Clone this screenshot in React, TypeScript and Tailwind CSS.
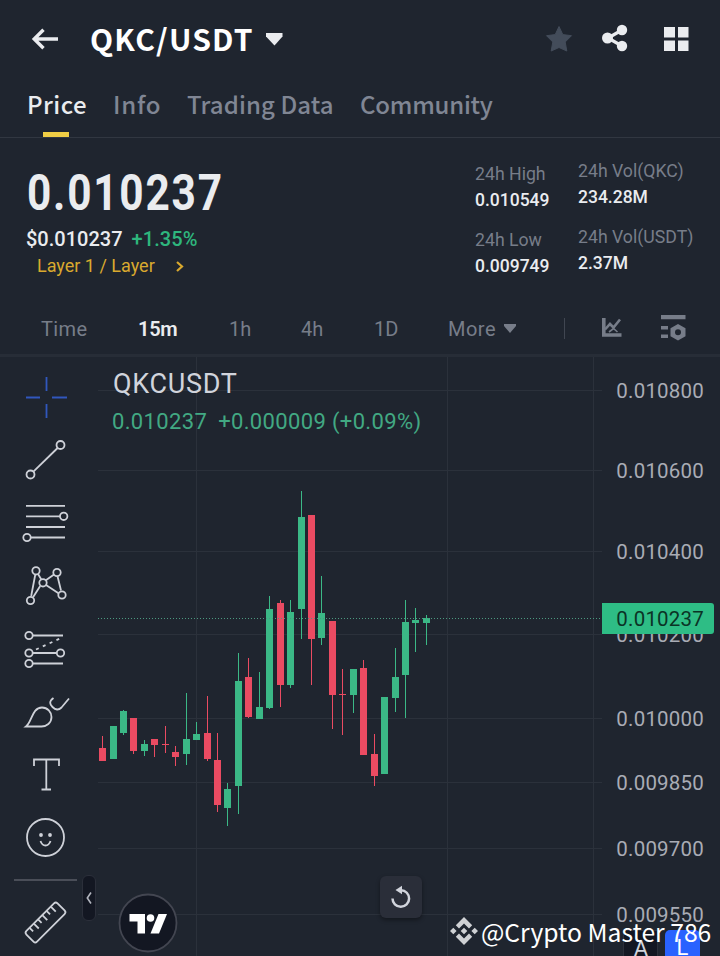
import React from "react";

const SANS = "font-['Noto_Sans_CJK_SC',sans-serif]";

type Candle = [x: number, high: number, top: number, bottom: number, low: number, up: 0 | 1];

const candles: Candle[] = [
  [99, 736, 748, 761, 761, 0],
  [110, 726, 726, 759, 759, 1],
  [120, 710, 711, 733, 735, 1],
  [130, 718, 718, 751, 754, 0],
  [141, 740, 744, 751, 756, 1],
  [151, 739, 739, 745, 757, 0],
  [162, 726, 744, 745, 753, 0],
  [172, 746, 752, 757, 766, 0],
  [183, 693, 739, 754, 765, 1],
  [193, 722, 734, 740, 740, 1],
  [204, 696, 733, 759, 761, 0],
  [214, 733, 760, 805, 812, 0],
  [224, 783, 789, 808, 826, 1],
  [235, 653, 681, 786, 814, 1],
  [245, 658, 677, 717, 718, 0],
  [256, 672, 707, 719, 719, 1],
  [266, 596, 609, 708, 709, 1],
  [277, 600, 603, 685, 707, 0],
  [287, 600, 612, 685, 688, 1],
  [298, 491, 517, 609, 639, 1],
  [308, 515, 515, 639, 685, 0],
  [318, 576, 613, 638, 645, 1],
  [329, 621, 621, 695, 729, 0],
  [339, 669, 694, 695, 735, 0],
  [350, 669, 669, 695, 713, 1],
  [360, 660, 668, 755, 755, 0],
  [371, 734, 754, 776, 786, 0],
  [381, 697, 697, 774, 774, 1],
  [392, 648, 677, 698, 712, 1],
  [402, 600, 622, 675, 718, 1],
  [412, 608, 620, 623, 652, 1],
  [423, 615, 618, 623, 645, 1],
];

const levels: [number, string][] = [
  [390, "0.010800"],
  [470, "0.010600"],
  [551, "0.010400"],
  [634, "0.010200"],
  [718, "0.010000"],
  [782, "0.009850"],
  [848, "0.009700"],
  [914, "0.009550"],
];

function Header() {
  return (
    <header className="flex h-[78px] items-center pl-[31px] pr-[31px]">
      <svg width="28" height="22" viewBox="0 0 28 22" fill="none" stroke="#eaecef" strokeWidth="3.4">
        <path d="M27 11H4M12.5 1.8 3.2 11l9.3 9.2" />
      </svg>
      <h1 className={`${SANS} -mt-[3px] ml-[31px] w-[162px] whitespace-nowrap text-[30px] font-bold leading-[44px] tracking-[1.2px] text-white`}>
        QKC/USDT
      </h1>
      <svg className="ml-[14px]" width="17" height="14" viewBox="0 0 17 14" fill="#eaecef">
        <path d="M0 1h16.500v3.500L8.500 13.500 0 4.500z" />
      </svg>
      <svg className="ml-auto" width="28" height="28" viewBox="0 0 28 28">
        <path d="M14 1.5l3.800 8.100 8.700 1.100-6.300 6.300 1.600 9-7.800-3.500L6.200 26l1.600-9-6.300-6.300 8.700-1.100z" fill="#434c5a" stroke="#434c5a" strokeWidth="1" strokeLinejoin="round" />
      </svg>
      <svg className="-mt-[2px] ml-[29px]" width="26" height="28" viewBox="0 0 26 28" fill="#eaecef">
        <path d="M20 6 6 14l14 8" fill="none" stroke="#eaecef" strokeWidth="3.2" />
        <circle cx="20" cy="6" r="5.200" />
        <circle cx="5.500" cy="14" r="5.500" />
        <circle cx="20" cy="22" r="5.200" />
      </svg>
      <svg className="-mt-px ml-[36px]" width="25" height="24" viewBox="0 0 25 24" fill="#eaecef">
        <path d="M0 0h11v10.500H0zM14 0h10.500v10.500H14zM0 13.500h11V24H0zM14 13.500h10.500V24H14z" />
      </svg>
    </header>
  );
}

function Tabs() {
  return (
    <nav className={`${SANS} flex h-[60px] border-b border-[#313741] pl-[27px] text-[24px] font-medium leading-[34px] text-[#808694]`}>
      <div className="flex w-[86px] flex-col pt-[9px] text-[#eaecef]">
        <span className="tracking-[0.5px]">Price</span>
        <span className="ml-4 mt-[11px] h-[5px] w-[26px] shrink-0 bg-[#f0ce45]" />
      </div>
      <span className="w-[74px] pt-[9px] tracking-[0.8px]">Info</span>
      <span className="w-[173px] whitespace-nowrap pt-[9px] tracking-[0.1px]">Trading Data</span>
      <span className="pt-[9px] tracking-[-0.25px]">Community</span>
    </nav>
  );
}

function Stat({ label, value }: { label: string; value: string }) {
  return (
    <div className="h-[66px]">
      <div className="whitespace-nowrap text-[17.700px] leading-[26px] text-[#777d89]">{label}</div>
      <div className="whitespace-nowrap text-[17.500px] font-medium leading-[26px] text-[#eaecef]">{value}</div>
    </div>
  );
}

function Summary() {
  return (
    <section className="flex h-[164px] pl-[27px]">
      <div className="w-[448px] pt-[26px]">
        <div className="origin-left scale-x-[0.84] text-[50.500px] font-bold leading-[58px] tracking-[2.100px] text-[#eaecef]">0.010237</div>
        <div className="-ml-px mt-[4px] flex gap-[9px] text-[20px] font-medium leading-[26px]">
          <span className="text-[#eaecef]">$0.010237</span>
          <span className="tracking-[0.1px] text-[#2eb67d]">+1.35%</span>
        </div>
        <div className="flex items-center pl-[10px] pt-px text-[18px] leading-[26px] text-[#d9a92e]">
          <span>Layer 1 / Layer</span>
          <svg className="ml-[21px]" width="8" height="11" viewBox="0 0 8 11" fill="none" stroke="#d9a92e" strokeWidth="2.200">
            <path d="M1 1l5 4.500-5 4.500" />
          </svg>
        </div>
      </div>
      <div className="w-[103px] pt-[23px]">
        <Stat label="24h High" value="0.010549" />
        <Stat label="24h Low" value="0.009749" />
      </div>
      <div className="pt-[20px]">
        <Stat label="24h Vol(QKC)" value="234.28M" />
        <Stat label="24h Vol(USDT)" value="2.37M" />
      </div>
    </section>
  );
}

function Intervals() {
  return (
    <div className="flex h-[52px] items-center pl-[41px] pt-px text-[20px] leading-[28px] text-[#777d89]">
      <span className="w-[97px] tracking-[0.4px]">Time</span>
      <span className="w-[91px] font-semibold tracking-[-0.3px] text-[#eaecef]">15m</span>
      <span className="w-[72px]">1h</span>
      <span className="w-[73px]">4h</span>
      <span className="w-[74px]">1D</span>
      <span className="w-[56px] tracking-[0.5px]">More</span>
      <svg width="12" height="9" viewBox="0 0 12 9" fill="#777d89">
        <path d="M0 0h12v2L6 9 0 2z" />
      </svg>
      <span className="ml-[48px] h-[21px] w-px bg-[#404651]" />
      <svg className="-mt-[3px] ml-[37px]" width="20" height="21" viewBox="0 0 20 21" fill="none" stroke="#777d89">
        <path d="M1.800 1v17H19.500" strokeWidth="3.600" />
        <path d="M3 12.500 8 7l3.500 3.500L18 2.500" strokeWidth="2.600" />
        <path d="M7 15l4.500-3.500 4 3.500" strokeWidth="1.600" />
      </svg>
      <svg className="-mt-px ml-[39px]" width="25" height="26" viewBox="0 0 25 26" fill="#777d89">
        <path d="M0 0h24.500v4.200H0zM0 11h7v3.500H0zM0 19.500h7V23H0z" />
        <path fillRule="evenodd" d="M17 9l7.500 4.200v8L17 25.500l-7.500-4.300v-8zM17 14.200a3 3 0 1 0 0 6 3 3 0 0 0 0-6z" />
      </svg>
    </div>
  );
}

/* Drawing tools share one coordinate space, 98px wide, starting at y = 357 */
function DrawingTools() {
  return (
    <aside className="relative h-[599px] w-[98px] shrink-0">
      <svg width="98" height="599" viewBox="0 357 98 599" fill="none" stroke="#ced1d8" strokeWidth="1.800">
        <path d="M46.500 377v14M46.500 404v14M26 397.500h14M52 397.500h15" stroke="#3157bd" />
        <circle cx="60.500" cy="445" r="4" />
        <circle cx="30.500" cy="474.500" r="4" />
        <path d="M57.600 448 33.400 471.600" />
        <path d="M26 505.800h39M26 516.300h34M26 527h39M31 537.500h34" />
        <circle cx="63.700" cy="516.300" r="3.700" />
        <circle cx="27" cy="537.500" r="3.700" />
        <path d="M35.300 574.500 31.200 596M38 574l3.200 5.200M45.500 580.500l8.500-6M46 585l12.500 8.200M40.200 586 33.200 597M57.500 576.200l3.500 14.300" />
        <circle cx="36" cy="570.800" r="3.700" />
        <circle cx="57" cy="572.500" r="3.700" />
        <circle cx="43" cy="582.800" r="3.700" />
        <circle cx="62" cy="595" r="3.700" />
        <circle cx="30.500" cy="600.500" r="3.700" />
        <path d="M33 635.500h30M33 653h23M33 663.500h30" />
        <path d="M36 649.500 61 638" strokeDasharray="3 4.500" />
        <circle cx="29" cy="635.500" r="3.700" />
        <circle cx="29" cy="653" r="3.700" />
        <circle cx="60.500" cy="653" r="3.700" />
        <circle cx="29" cy="663.500" r="3.700" />
        <path d="M26 726.500C32 722 32 707.500 42 707.500c5.500 0 9.500 4.300 9.500 9.500 0 6-5 9.500-10 9.500zM53.500 698c-5 3.500-3.500 6.500-1 9 3 3 6 3.500 9 .5L69 698.500" />
        <path d="M34 766v-6.500h25v6.500M46.300 759.500V789.500M41.500 789.500h9.500" />
        <circle cx="45.500" cy="837.500" r="18.500" />
        <circle cx="41" cy="835" r="1" fill="#ced1d8" />
        <circle cx="50" cy="835" r="1" fill="#ced1d8" />
        <path d="M40.500 841c2 6 8 6 10 0" />
        <path d="M14 880h63" stroke="#4a4e58" />
        <g transform="translate(45.500 922.500) rotate(-45)">
          <rect x="-22" y="-7.500" width="44" height="15" rx="2.500" />
          <path d="M-15-7.500v5M-9-7.500v7M-3-7.500v5M3-7.500v7M9-7.500v5M15-7.500v7" />
        </g>
      </svg>
      <button className="absolute left-[82px] top-[518px] flex h-[46px] w-[14px] items-center justify-center rounded-[6px] border border-[#2b2f3a] bg-[#131722]">
        <svg width="6" height="12" viewBox="0 0 6 12" fill="none" stroke="#b2b5be" strokeWidth="1.600">
          <path d="M5 .5 1.300 6 5 11.500" />
        </svg>
      </button>
    </aside>
  );
}

function Chart() {
  return (
    <div className="relative h-[599px] w-[622px] font-[Roboto,sans-serif]">
      <svg className="block" width="622" height="599" viewBox="98 357 622 599" shapeRendering="crispEdges">
        {levels.map(([y]) => (
          <rect key={y} x="98" y={y} width="504" height="1" fill="#2b313b" />
        ))}
        {[196, 447, 593].map((x) => (
          <rect key={x} x={x} y="357" width="1" height="599" fill="#2b313b" />
        ))}
        {candles.map(([x, high, top, bottom, low, up]) => (
          <g key={x} fill={up ? "#3bb886" : "#ea4b62"}>
            <rect x={x + 3} y={high} width="1" height={low - high} />
            <rect x={x} y={top} width="7" height={bottom - top} />
          </g>
        ))}
        <path d="M98 618.500H602" stroke="#4c9a80" strokeDasharray="1 2" />
      </svg>
      {levels.map(([y, label]) => (
        <span key={label} className="absolute right-[16px] text-[20.500px] leading-[24px] tracking-[0.2px] text-[#a9acb5]" style={{ top: y - 368 }}>
          {label}
        </span>
      ))}
      <div className="absolute left-[504px] top-[246px] h-[31px] w-[112px] rounded-r-[3px] bg-[#2ebd85] pr-[10px] text-right text-[20.500px] leading-[32px] tracking-[0.2px] text-[#0b3325]">
        0.010237
      </div>
      <div className="absolute left-[14px] top-[10px]">
        <div className="pl-px text-[27px] leading-[34px] tracking-[0.700px] text-[#d1d4dc]">QKCUSDT</div>
        <div className="mt-[8px] flex gap-[11px] whitespace-nowrap text-[22px] leading-[26px] tracking-[0.350px] text-[#42a983]">
          <span>0.010237</span>
          <span>+0.000009 (+0.09%)</span>
        </div>
      </div>
      <svg className="absolute left-[20px] top-[536px]" width="60" height="60" viewBox="0 0 60 60">
        <circle cx="30" cy="30" r="28.500" fill="#131722" stroke="#434651" strokeWidth="1.800" />
        <g fill="#fff">
          <path d="M11.500 21H27v19.500h-7.500V28.500h-8z" />
          <circle cx="32.500" cy="25" r="3.800" />
          <path d="M40.500 21h8.500l-8 19.500h-8.500z" />
        </g>
      </svg>
      <button className="absolute left-[282px] top-[519px] flex h-[42px] w-[42px] items-center justify-center rounded-[6px] bg-[#2a2e39] shadow-[0_2px_4px_rgba(0,0,0,0.4)]">
        <svg width="22" height="24" viewBox="0 0 22 24" fill="none">
          <path d="M2.500 13.500a8.300 8.300 0 1 0 8.500-8.300" stroke="#d1d4dc" strokeWidth="2.500" />
          <path d="M5.500 5 12 .8v8.400z" fill="#d1d4dc" />
        </svg>
      </button>
      <div className="absolute left-[525px] top-[573px] flex h-[26px] gap-[7px] overflow-hidden text-[22px]">
        <span className="h-[34px] w-[35px] border border-[#2b2f3a] bg-[#131722] pl-px text-center leading-[36px] text-[#d1d4dc]">A</span>
        <span className="h-[34px] w-[35px] rounded-t-[5px] bg-[#2962ff] text-center leading-[36px] text-white">L</span>
      </div>
      <div className="absolute left-[352px] top-[557px] flex items-center">
        <svg width="28" height="28" viewBox="0 0 28 28" fill="#cfd1d4">
          <path d="M14 0l8.200 8.200-3.200 3.200-5-5-5 5-3.200-3.200zM14 28l8.200-8.200-3.200-3.200-5 5-5-5-3.200 3.200zM14 10.700l3.300 3.300-3.300 3.300-3.300-3.300zM3.300 10.700 6.600 14l-3.300 3.300L0 14zM24.700 10.700 28 14l-3.300 3.300-3.300-3.300z" />
        </svg>
        <span className={`${SANS} ml-[3px] whitespace-nowrap text-[24.700px] leading-[34px] text-white`}>@Crypto Master 786</span>
      </div>
    </div>
  );
}

export default function App() {
  return (
    <main className="h-[956px] w-[720px] overflow-hidden bg-[#1f252f] font-[Roboto,sans-serif]">
      <Header />
      <Tabs />
      <Summary />
      <Intervals />
      <div className="h-[3px] bg-[#272d37]" />
      <div className="flex">
        <DrawingTools />
        <Chart />
      </div>
    </main>
  );
}
